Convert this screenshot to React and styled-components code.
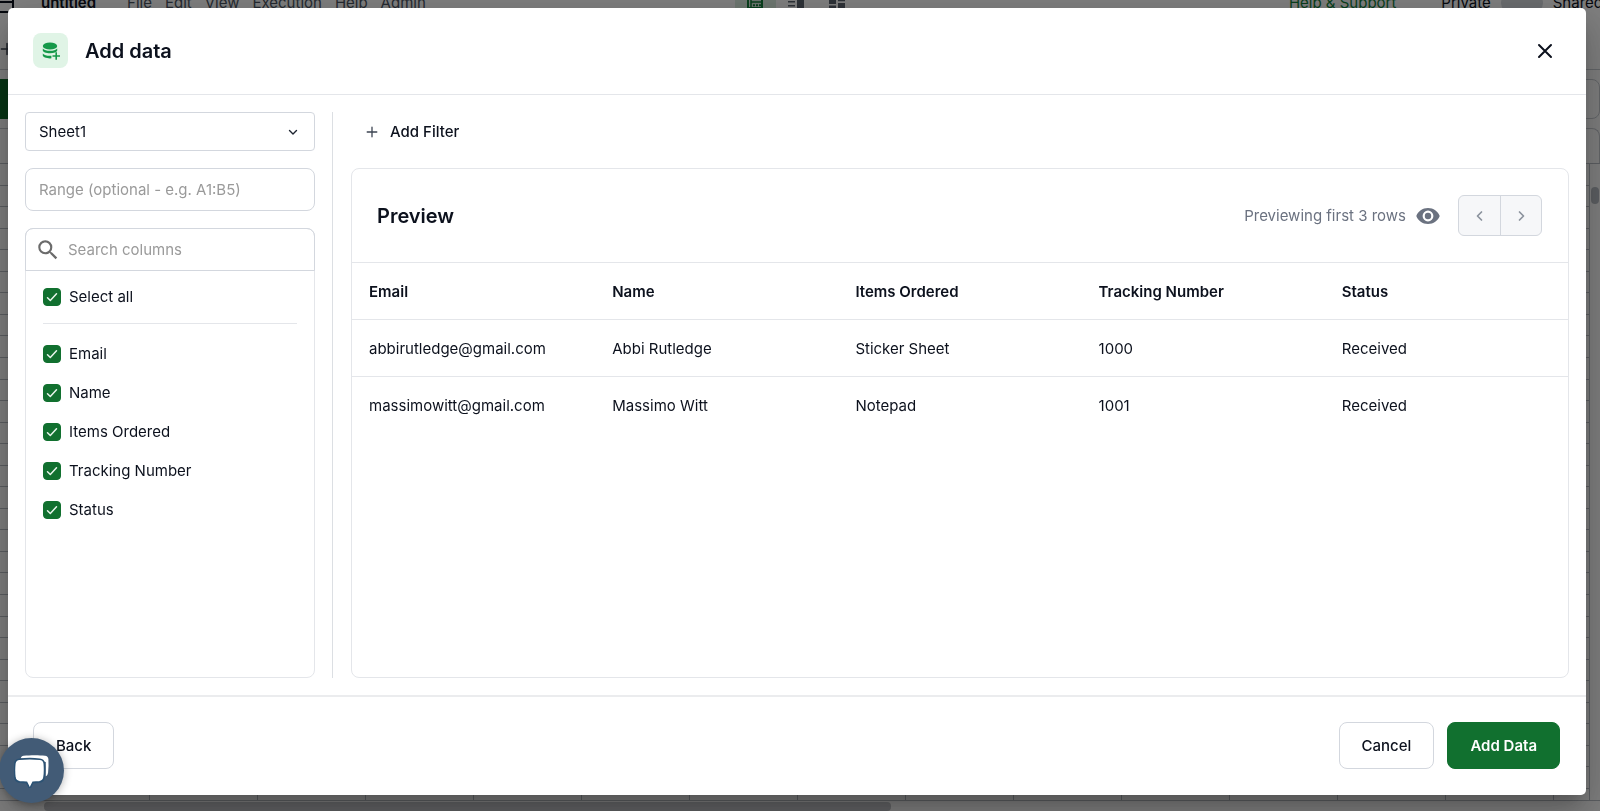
import React, { useState } from 'react'
import styled, { createGlobalStyle, css } from 'styled-components'

const columns = ['Email', 'Name', 'Items Ordered', 'Tracking Number', 'Status'];

const rows = [
  ['abbirutledge@gmail.com', 'Abbi Rutledge', 'Sticker Sheet', '1000', 'Received'],
  ['massimowitt@gmail.com', 'Massimo Witt', 'Notepad', '1001', 'Received'],
];

const menus = ['File', 'Edit', 'View', 'Execution', 'Help', 'Admin'];

const DatabaseIcon = () => (
  <svg width="18" height="18" viewBox="0 0 18 18" fill="#16994a" aria-hidden="true">
    <ellipse cx="8" cy="4" rx="7.2" ry="3.6" />
    <path d="M0.8 6.4c1.200 1.700 4 2.400 7.200 2.400s6-.7 7.200-2.400v2c0 .8-.9 1.500-2.200 2-1.300.5-3 .8-5 .8-4 0-7.200-1.300-7.200-2.800z" />
    <path d="M0.8 11.400c1.200 1.600 3.800 2.400 7.200 2.400l1.400-.1v2.600l-1.400.1c-4 0-7.200-1.200-7.200-2.800z" />
    <path d="M13.400 10.300h1.600v2.900H18v1.600h-3v2.900h-1.600v-2.900h-2.900v-1.600h2.900z" />
  </svg>
);

const CloseIcon = () => (
  <svg width="16" height="16" viewBox="0 0 16 16" fill="none" stroke="#0c111d" strokeWidth="2" strokeLinecap="round" aria-hidden="true">
    <path d="M2 2l12 12M14 2L2 14" />
  </svg>
);

const ChevronDownIcon = () => (
  <svg width="10" height="10" viewBox="0 0 10 10" fill="none" stroke="#1d2430" strokeWidth="1.400" strokeLinecap="round" strokeLinejoin="round" aria-hidden="true">
    <path d="M1.500 3.500L5 7l3.500-3.500" />
  </svg>
);

const SearchIcon = () => (
  <svg width="26" height="26" viewBox="0 0 24 24" fill="#6b6b6b" aria-hidden="true">
    <path d="M15.500 14h-.79l-.28-.27A6.470 6.470 0 0 0 16 9.500 6.500 6.500 0 1 0 9.500 16c1.610 0 3.090-.59 4.230-1.570l.27.28v.79l5 4.990L20.490 19l-4.990-5zm-6 0C7.010 14 5 11.990 5 9.500S7.010 5 9.500 5 14 7.010 14 9.500 11.990 14 9.500 14z" />
  </svg>
);

const PlusIcon = ({ size = 12 }) => (
  <svg width={size} height={size} viewBox="0 0 12 12" fill="none" stroke="#3c4452" strokeWidth="1.300" strokeLinecap="round" aria-hidden="true">
    <path d="M6 1.200v9.600M1.200 6h9.600" />
  </svg>
);

const EyeIcon = () => (
  <svg width="24" height="24" viewBox="0 0 24 24" fill="#6b7280" aria-hidden="true">
    <path d="M12 4C6.500 4 2 7.300.3 12c1.700 4.700 6.200 8 11.700 8s10-3.300 11.700-8C22 7.300 17.500 4 12 4zm0 13.400a5.400 5.400 0 1 1 0-10.800 5.400 5.400 0 0 1 0 10.800zm0-8.600a3.200 3.200 0 1 0 0 6.400 3.200 3.200 0 0 0 0-6.400z" />
  </svg>
);

const AngleIcon = ({ d }) => (
  <svg width="12" height="12" viewBox="0 0 12 12" fill="none" stroke="#8b929d" strokeWidth="1.700" strokeLinecap="round" strokeLinejoin="round" aria-hidden="true">
    <path d={d} />
  </svg>
);

const CheckIcon = () => (
  <svg width="12" height="12" viewBox="0 0 12 12" fill="none" stroke="#e9f5ec" strokeWidth="1.500" strokeLinecap="round" strokeLinejoin="round" aria-hidden="true">
    <path d="M1.500 6.800l2.800 2.700 6.200-6.700" />
  </svg>
);

const ChatIcon = () => (
  <svg width="36" height="34" viewBox="0 0 36 34" fill="#fff" aria-hidden="true">
    <path d="M6.800 4.200c.3-1.500 1.300-2.300 2.800-2.400C16 1 25 1 31 1.700c2 .2 3.200 1.500 3.400 3.400.3 4.500.2 9-.3 13.300-.3 2-1 3.200-2.300 3.800V8z" />
    <path
      d="M5.500 5.300c6.500-.8 14-.8 20.300 0 2.600.3 4.200 1.800 4.500 4.300.4 4.700.4 9.500-.3 13.900-.4 2.500-2 4-4.500 4.400-2.300.3-4.500.5-6.500.5l-2.300 4.500c-.5.8-1.300.8-1.800 0l-2.300-4.500c-2.500 0-4.800-.2-7.100-.5C3 27.500 1.300 26 .9 23.500.3 19.100.3 14.300.8 9.600c.4-2.500 2-4 4.700-4.300z"
      stroke="#2b5274"
      strokeWidth="1.600"
    />
  </svg>
);

const SheetViewIcon = () => (
  <svg width="18" height="18" viewBox="0 0 18 18" fill="none" stroke="#11803a" aria-hidden="true">
    <path d="M2 1v13h14V1z" strokeWidth="2" />
    <path d="M5 1v13M5 8h11" strokeWidth="1.500" />
    <path d="M7 11.200h8" strokeWidth="2" strokeDasharray="2 1" />
  </svg>
);

const SplitViewIcon = () => (
  <svg width="18" height="18" viewBox="0 0 18 18" fill="#5b6470" aria-hidden="true">
    <path d="M1 3h7v1.500H1zM1 7h7v1.500H1zM1 11h7v1.500H1zM10 1h7v13h-7z" />
  </svg>
);

const BoardViewIcon = () => (
  <svg width="18" height="18" viewBox="0 0 18 18" fill="#5b6470" aria-hidden="true">
    <path d="M1 1h7v9H1zM1 11.500h7V14H1zM10 9h7v6h-7zM10 5h7v2.300h-7z" />
  </svg>
);

const LogoIcon = () => (
  <svg width="14" height="20" viewBox="0 0 14 20" fill="none" stroke="#0c111d" strokeWidth="2" aria-hidden="true">
    <path d="M0 1h13v18H0M0 9h13" />
  </svg>
);

const CheckOption = ({ label, checked, onChange }) => (
  <Option>
    <CheckBox>
      <input type="checkbox" checked={checked} onChange={onChange} />
      {checked && <CheckIcon />}
    </CheckBox>
    {label}
  </Option>
);

const Workbook = () => (
  <Page aria-hidden="true">
    <TopBar>
      <LogoIcon />
      <FileName>untitled</FileName>
      <Menus>
        {menus.map((menu) => <span key={menu}>{menu}</span>)}
      </Menus>
      <Views>
        <ViewTab $active><SheetViewIcon /></ViewTab>
        <ViewTab><SplitViewIcon /></ViewTab>
        <ViewTab><BoardViewIcon /></ViewTab>
      </Views>
      <Sharing>
        <Support>Help &amp; Support</Support>
        <span>Private</span>
        <Toggle />
        <span>Shared</span>
      </Sharing>
    </TopBar>
    <ToolBar><PlusIcon size={14} /></ToolBar>
    <FormulaBar>
      <FormulaToggle />
      <FormulaField />
    </FormulaBar>
    <TabField />
    <SheetArea>
      <Sheet>
        {Array.from({ length: 29 }, (_, i) => <SheetRow key={i} />)}
      </Sheet>
      <ScrollTrack><ScrollThumb /></ScrollTrack>
    </SheetArea>
    <BottomTrack><BottomThumb /></BottomTrack>
  </Page>
);

const App = () => {
  const [selected, setSelected] = useState(columns);
  const [search, setSearch] = useState('');
  const [range, setRange] = useState('');
  const allSelected = selected.length === columns.length;

  const toggle = (name) => {
    setSelected(selected.includes(name)
      ? selected.filter((item) => item !== name)
      : [...selected, name]);
  };

  return (
    <>
      <GlobalStyle />
      <Workbook />
      <Overlay>
        <Dialog role="dialog" aria-modal="true" aria-labelledby="dialog-title">
          <DialogHeader>
            <IconTile><DatabaseIcon /></IconTile>
            <Title id="dialog-title">Add data</Title>
            <CloseButton aria-label="Close"><CloseIcon /></CloseButton>
          </DialogHeader>
          <DialogBody>
            <Sidebar>
              <SelectWrap>
                <select aria-label="Sheet">
                  <option>Sheet1</option>
                </select>
                <ChevronDownIcon />
              </SelectWrap>
              <RangeInput
                aria-label="Range"
                placeholder="Range (optional - e.g. A1:B5)"
                value={range}
                onChange={(e) => setRange(e.target.value)}
              />
              <ColumnPicker>
                <SearchBox>
                  <SearchIcon />
                  <input
                    aria-label="Search columns"
                    placeholder="Search columns"
                    value={search}
                    onChange={(e) => setSearch(e.target.value)}
                  />
                </SearchBox>
                <Options>
                  <CheckOption
                    label="Select all"
                    checked={allSelected}
                    onChange={() => setSelected(allSelected ? [] : columns)}
                  />
                  <Separator />
                  {columns
                    .filter((name) => name.toLowerCase().includes(search.toLowerCase()))
                    .map((name) => (
                      <CheckOption
                        key={name}
                        label={name}
                        checked={selected.includes(name)}
                        onChange={() => toggle(name)}
                      />
                    ))}
                </Options>
              </ColumnPicker>
            </Sidebar>
            <Main>
              <FilterButton><PlusIcon /> Add Filter</FilterButton>
              <PreviewCard>
                <PreviewHeader>
                  <Title>Preview</Title>
                  <PreviewNote>Previewing first 3 rows <EyeIcon /></PreviewNote>
                  <Pager>
                    <button aria-label="Previous rows"><AngleIcon d="M7.500 2L3.500 6l4 4" /></button>
                    <button aria-label="Next rows"><AngleIcon d="M4.500 2l4 4-4 4" /></button>
                  </Pager>
                </PreviewHeader>
                <PreviewTable>
                  <thead>
                    <tr>
                      {columns.map((name) => <th key={name}>{name}</th>)}
                    </tr>
                  </thead>
                  <tbody>
                    {rows.map((row) => (
                      <tr key={row[0]}>
                        {row.map((cell) => <td key={cell}>{cell}</td>)}
                      </tr>
                    ))}
                  </tbody>
                </PreviewTable>
              </PreviewCard>
            </Main>
          </DialogBody>
          <DialogFooter>
            <Button>Back</Button>
            <Actions>
              <Button>Cancel</Button>
              <Button $primary>Add Data</Button>
            </Actions>
          </DialogFooter>
        </Dialog>
      </Overlay>
      <ChatButton aria-label="Open chat"><ChatIcon /></ChatButton>
    </>
  )
}

export default App;

const GlobalStyle = createGlobalStyle`
  * {
    box-sizing: border-box;
  }
  body {
    margin: 0;
    overflow: hidden;
    font-family: Inter, "Liberation Sans", sans-serif;
    font-size: 15px;
    line-height: 20px;
    color: #0c111d;
  }
  button, input, select {
    font: inherit;
    color: inherit;
  }
  button {
    cursor: pointer;
  }
`;

/* workbook behind the dialog */

const Page = styled.div`
  display: flex;
  flex-direction: column;
  height: 100vh;
  background: #fff;
`;

const TopBar = styled.div`
  display: flex;
  align-items: center;
  flex: none;
  height: 30px;
  margin-top: -12px;
`;

const FileName = styled.span`
  margin-left: 27px;
  font-weight: 600;
`;

const Menus = styled.div`
  display: flex;
  gap: 13px;
  margin-left: 31px;
  color: #4b5563;
`;

const Views = styled.div`
  display: flex;
  margin: 0 auto;
`;

const ViewTab = styled.span`
  display: flex;
  align-items: center;
  justify-content: center;
  width: 41px;
  height: 30px;
  background: ${(props) => (props.$active ? '#dcefe1' : 'transparent')};
`;

const Sharing = styled.div`
  display: flex;
  align-items: center;
  justify-content: flex-end;
  gap: 10px;
  width: 436px;
  margin-right: -3px;
`;

const Support = styled.span`
  margin-right: 35px;
  color: #11803a;
`;

const Toggle = styled.span`
  width: 42px;
  height: 20px;
  border-radius: 10px;
  background: #d5d9de;
`;

const ToolBar = styled.div`
  display: flex;
  align-items: center;
  flex: none;
  height: 52px;
  padding-top: 10px;
  border-bottom: 1px solid #c8ccd2;
`;

const FormulaBar = styled.div`
  display: flex;
  gap: 8px;
  flex: none;
  height: 50px;
  padding-top: 9px;
`;

const FormulaToggle = styled.div`
  width: 120px;
  height: 40px;
  background: #0f6b2b;
`;

const FormulaField = styled.div`
  flex: 1;
  height: 40px;
  border: 1px solid #c8ccd2;
  border-radius: 8px;
`;

const TabField = styled.div`
  flex: none;
  height: 35px;
  margin-top: 8px;
  border: 1px solid #c8ccd2;
  border-left: 0;
  border-bottom: 0;
  border-radius: 0 8px 0 0;
`;

const SheetArea = styled.div`
  display: flex;
  flex: 1;
  min-height: 0;
  border-top: 1px solid #b9bec5;
`;

const Sheet = styled.div`
  display: grid;
  flex: 1;
  grid-auto-rows: 1fr;
  overflow: hidden;
  padding-bottom: 11px;
  border-right: 1px solid #b9bec5;
  background: repeating-linear-gradient(to right, transparent 0 107px, #b9bec5 107px 108px) 42px 0 no-repeat;
`;

const SheetRow = styled.div`
  border-bottom: 1px solid #b9bec5;
`;

const ScrollTrack = styled.div`
  width: 10px;
  padding: 23px 1px 0;
`;

const ScrollThumb = styled.div`
  height: 17px;
  border-radius: 4px;
  background: #b9bec5;
`;

const BottomTrack = styled.div`
  flex: none;
  height: 11px;
  padding: 1px 44px;
  border-top: 1px solid #b9bec5;
`;

const BottomThumb = styled.div`
  width: 56%;
  height: 9px;
  border-radius: 4px;
  background: #c4c6ca;
`;

/* dialog */

const Overlay = styled.div`
  position: fixed;
  inset: 0;
  display: flex;
  padding: 8px 14px 16px 8px;
  background: rgba(0, 0, 0, 0.5);
`;

const Dialog = styled.div`
  display: flex;
  flex: 1;
  flex-direction: column;
  min-width: 0;
  border-radius: 5px;
  background: #fff;
  box-shadow: 0 11px 15px -7px rgba(0, 0, 0, 0.2),
    0 24px 38px 3px rgba(0, 0, 0, 0.14),
    0 9px 46px 8px rgba(0, 0, 0, 0.12);
`;

const DialogHeader = styled.div`
  display: flex;
  align-items: center;
  padding: 25px 25px 26px;
  border-bottom: 1px solid #e4e6ea;
`;

const IconTile = styled.span`
  display: flex;
  align-items: center;
  justify-content: center;
  width: 35px;
  height: 35px;
  margin-right: 17px;
  border-radius: 8px;
  background: #e0f4e6;
`;

const Title = styled.h2`
  margin: 0;
  font-size: 20px;
  line-height: 28px;
  font-weight: 600;
`;

const CloseButton = styled.button`
  display: flex;
  margin-left: auto;
  padding: 8px;
  border: 0;
  background: none;
`;

const DialogBody = styled.div`
  display: flex;
  flex: 1;
  gap: 18px;
  min-height: 0;
  padding: 17px;
`;

const Sidebar = styled.div`
  display: flex;
  flex-direction: column;
  gap: 17px;
  width: 308px;
  padding-right: 17px;
  border-right: 1px solid #dcdfe3;
`;

const SelectWrap = styled.div`
  display: grid;
  align-items: center;
  select {
    grid-area: 1 / 1;
    appearance: none;
    height: 39px;
    padding: 0 13px;
    border: 1px solid #d3d7de;
    border-radius: 4px;
    background: #fff;
  }
  svg {
    grid-area: 1 / 1;
    justify-self: end;
    margin-right: 17px;
    pointer-events: none;
  }
`;

const RangeInput = styled.input`
  height: 43px;
  padding: 0 13px;
  border: 1px solid #d3d7de;
  border-radius: 8px;
  &::placeholder {
    color: #9a9a9a;
  }
`;

const ColumnPicker = styled.div`
  flex: 1;
  border: 1px solid #e4e6ea;
  border-radius: 8px;
`;

const SearchBox = styled.div`
  display: flex;
  align-items: center;
  gap: 7px;
  height: 43px;
  margin: -1px;
  padding-left: 9px;
  border: 1px solid #d3d7de;
  border-radius: 8px 8px 0 0;
  input {
    flex: 1;
    min-width: 0;
    padding: 0;
    border: 0;
    outline: 0;
    background: none;
  }
  input::placeholder {
    color: #9a9a9a;
  }
`;

const Options = styled.div`
  padding: 7px 17px;
`;

const Option = styled.label`
  display: flex;
  align-items: center;
  gap: 8px;
  height: 39px;
`;

const CheckBox = styled.span`
  display: grid;
  place-items: center;
  input {
    grid-area: 1 / 1;
    appearance: none;
    width: 18px;
    height: 18px;
    margin: 0;
    border: 1px solid #d3d7de;
    border-radius: 4px;
  }
  input:checked {
    border-color: #11702f;
    background: #11702f;
  }
  svg {
    grid-area: 1 / 1;
    pointer-events: none;
  }
`;

const Separator = styled.hr`
  height: 1px;
  margin: 7px 0 10px;
  border: 0;
  background: #e4e6ea;
`;

const Main = styled.div`
  display: flex;
  flex: 1;
  flex-direction: column;
  align-items: stretch;
  gap: 17px;
  min-width: 0;
`;

const FilterButton = styled.button`
  display: flex;
  align-items: center;
  align-self: flex-start;
  gap: 12px;
  height: 39px;
  padding: 0 15px;
  border: 0;
  background: none;
  font-weight: 500;
`;

const PreviewCard = styled.div`
  flex: 1;
  border: 1px solid #e4e6ea;
  border-radius: 8px;
`;

const PreviewHeader = styled.div`
  display: flex;
  align-items: center;
  height: 93px;
  padding: 0 26px 0 25px;
`;

const PreviewNote = styled.span`
  display: flex;
  align-items: center;
  gap: 10px;
  margin-left: auto;
  color: #6b7280;
`;

const Pager = styled.div`
  display: flex;
  margin-left: 18px;
  border: 1px solid #d3d7de;
  border-radius: 6px;
  background: #f6f7f9;
  button {
    display: flex;
    align-items: center;
    justify-content: center;
    width: 41px;
    height: 39px;
    padding: 0;
    border: 0;
    background: none;
  }
  button + button {
    border-left: 1px solid #d3d7de;
  }
`;

const PreviewTable = styled.table`
  width: 100%;
  table-layout: fixed;
  border-collapse: collapse;
  text-align: left;
  th, td {
    height: 57px;
    padding: 1px 17px 0;
    border-top: 1px solid #e4e6ea;
  }
  th {
    font-weight: 600;
  }
`;

const DialogFooter = styled.div`
  display: flex;
  justify-content: space-between;
  padding: 25px 26px 26px 25px;
  border-top: 2px solid #ebecee;
`;

const Actions = styled.div`
  display: flex;
  gap: 13px;
`;

const Button = styled.button`
  height: 47px;
  padding: 0 22px;
  border: 1px solid #d3d7de;
  border-radius: 8px;
  background: #fff;
  font-weight: 500;
  ${(props) => props.$primary && css`
    border-color: #11702f;
    background: #11702f;
    color: #fff;
    font-weight: 600;
  `}
`;

const ChatButton = styled.button`
  position: fixed;
  left: -1px;
  bottom: 8px;
  display: flex;
  align-items: center;
  justify-content: center;
  width: 65px;
  height: 65px;
  padding: 0;
  border: 0;
  border-radius: 50%;
  background: #425b76;
  box-shadow: 0 1px 8px rgba(0, 0, 0, 0.3);
`;
